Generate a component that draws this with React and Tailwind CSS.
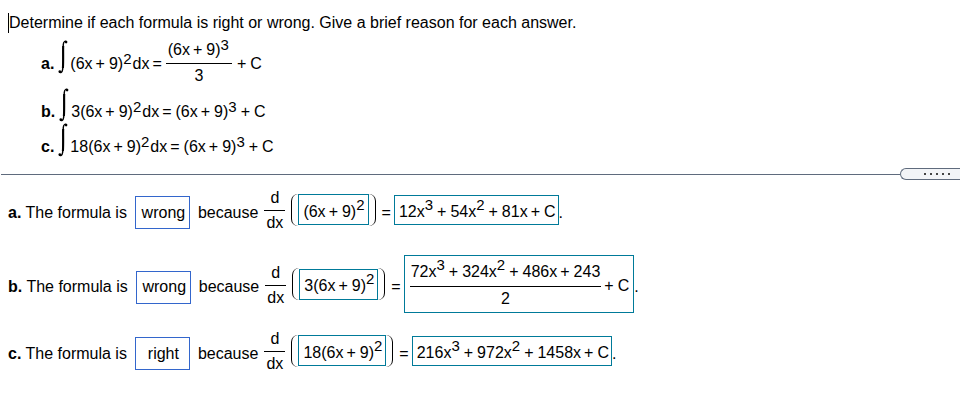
import React, { useState } from "react";

const integrals = [
  { id: "b", left: "3(6x + 9)^2 dx", right: "(6x + 9)^3 + C" },
  { id: "c", left: "18(6x + 9)^2 dx", right: "(6x + 9)^3 + C" },
];

const answers = [
  {
    id: "a",
    choice: "wrong",
    inner: "(6x + 9)^2",
    result: "12x^3 + 54x^2 + 81x + C",
    space: "mt-1.5",
  },
  {
    id: "b",
    choice: "wrong",
    inner: "3(6x + 9)^2",
    top: "72x^3 + 324x^2 + 486x + 243",
    bottom: "2",
    result: "+ C",
    space: "mt-4",
  },
  {
    id: "c",
    choice: "right",
    inner: "18(6x + 9)^2",
    result: "216x^3 + 972x^2 + 1458x + C",
    space: "mt-2",
  },
];

// "6x^2 + 9" -> terms, operators and superscripts
function Formula({ text, raised }) {
  return (
    <span className="inline-flex items-baseline whitespace-nowrap leading-5">
      {text.split(" ").map((part, i) => {
        if (part === "+" || part === "=") {
          return (
            <span key={i} className="ml-[3px] mr-1">
              {part}
            </span>
          );
        }
        const [base, power] = part.split("^");
        return (
          <span key={i}>
            {base}
            {power && (
              <sup
                className={`relative mr-px align-baseline text-[15px] leading-none ${raised ? "-top-[7px]" : "-top-[5px]"}`}
              >
                {power}
              </sup>
            )}
          </span>
        );
      })}
    </span>
  );
}

function Integral() {
  return (
    <svg
      width="10"
      height="34"
      viewBox="0 0 10 34"
      fill="none"
      className="mr-0.5 shrink-0"
      aria-label="integral"
    >
      <path
        d="M8.6 2.2C7.4 0.6 5.6 1.2 5.3 4.4C4.9 9 5.2 12 5.2 17C5.2 22 5.2 26 4.6 29.6C4.2 32.4 2.4 33.4 1.2 31.9"
        stroke="black"
        strokeWidth="1.4"
      />
      <path d="M5.2 6C5 12 5.4 22 4.9 28" stroke="black" strokeWidth="2.1" />
      <circle cx="8.1" cy="2.1" r="1.3" fill="black" />
      <circle cx="1.8" cy="31.6" r="1.3" fill="black" />
    </svg>
  );
}

function Derivative() {
  return (
    <span className="mx-1.5 mb-1 inline-flex w-[21px] flex-col items-center">
      <span className="leading-6">d</span>
      <span className="h-px w-full bg-black" />
      <span className="leading-6">dx</span>
    </span>
  );
}

function AnswerRow({ item }) {
  const [choice, setChoice] = useState(item.choice);

  return (
    <div className={`flex min-h-12 items-center ${item.space}`}>
      <label htmlFor={`choice-${item.id}`} className="whitespace-pre">
        <b>{item.id}.</b> The formula is
      </label>
      <select
        id={`choice-${item.id}`}
        value={choice}
        onChange={(e) => setChoice(e.target.value)}
        className="mx-2 h-[33px] w-[55px] appearance-none border border-[#3366cc] bg-white pl-0.5 text-center"
      >
        <option value="right">right</option>
        <option value="wrong">wrong</option>
      </select>
      <span>because</span>
      <Derivative />
      <span className="mb-1.5 h-8 w-[7px] rounded-l-[7px] border-l border-black" />
      <button
        type="button"
        className="mb-1.5 flex h-[31px] items-center border border-[#007a99] pl-1 pr-0.5 pt-1"
      >
        <Formula text={item.inner} raised />
      </button>
      <span className="mb-1.5 h-8 w-[7px] rounded-r-[7px] border-r border-black" />
      <span className="ml-1.5 mr-[3px]">=</span>
      <button
        type="button"
        className={`mb-1.5 flex items-center border border-[#007a99] pt-1 ${item.top ? "h-[58px] pl-[5px] pr-1" : "h-[30px] pl-1 pr-0.5"}`}
      >
        {item.top && (
          <span className="flex flex-col items-center">
            <span className="h-7 px-px pt-1">
              <Formula text={item.top} raised />
            </span>
            <span className="h-px w-full bg-black" />
            <span className="h-7 leading-6">{item.bottom}</span>
          </span>
        )}
        <Formula text={item.result} raised />
      </button>
      <span>.</span>
    </div>
  );
}

export default function App() {
  return (
    <div className="min-h-screen overflow-x-hidden bg-white font-['Liberation_Sans',Arial,sans-serif] text-base leading-5 text-black">
      <section className="pl-2 pt-[13px]">
        <h1 className="border-l border-black">
          Determine if each formula is right or wrong. Give a brief reason for each answer.
        </h1>

        <div className="mt-[7px] flex flex-col gap-px pl-[33px]">
          <div className="flex h-[47px] items-start">
            <div className="flex h-[34px] items-end">
              <b className="mr-1">a.</b>
              <Integral />
              <Formula text="(6x + 9)^2 dx =" />
            </div>
            <div className="mr-0.5 flex flex-col items-center">
              <span className="h-[23px] px-0.5">
                <Formula text="(6x + 9)^3" />
              </span>
              <span className="h-px w-full bg-black" />
              <span className="leading-6">3</span>
            </div>
            <div className="flex h-[34px] items-end">
              <Formula text="+ C" />
            </div>
          </div>

          {integrals.map((row) => (
            <div key={row.id} className="flex h-[34px] items-end">
              <b className="mr-1">{row.id}.</b>
              <Integral />
              <Formula text={`${row.left} = ${row.right}`} />
            </div>
          ))}
        </div>
      </section>

      <div className="mt-[11px] flex items-center pl-px">
        <div className="h-px flex-1 bg-[#5f6b7d]" />
        <button
          type="button"
          aria-label="Resize panels"
          className="flex h-3 w-[60px] items-center justify-center gap-1 rounded-l-full border border-r-0 border-[#5f6b7d] bg-[#f2f4f7] pl-3"
        >
          {[0, 1, 2, 3, 4].map((dot) => (
            <span key={dot} className="size-0.5 bg-[#444]" />
          ))}
        </button>
      </div>

      <section className="pl-2">
        {answers.map((item) => (
          <AnswerRow key={item.id} item={item} />
        ))}
      </section>
    </div>
  );
}
